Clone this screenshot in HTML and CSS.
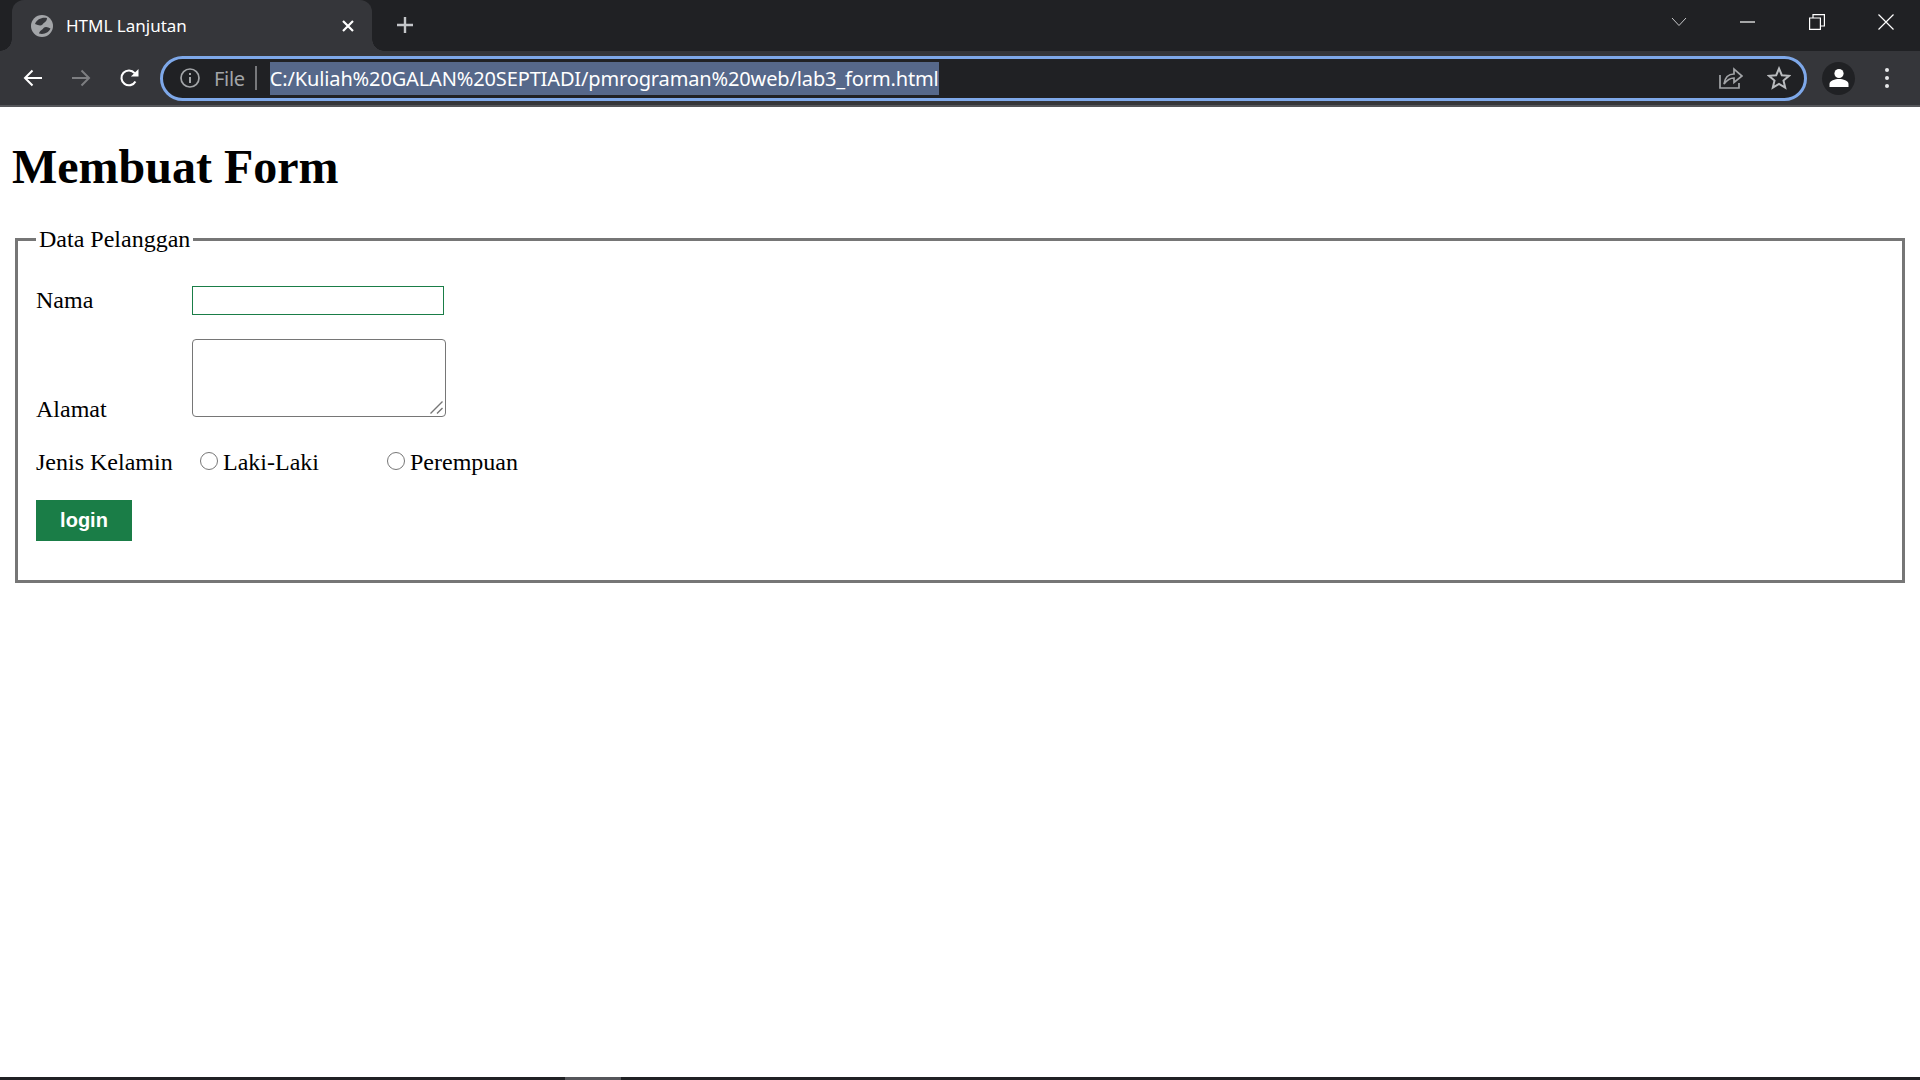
FILE: index.html
```html
<!DOCTYPE html>
<html lang="id">
<head>
  <meta charset="UTF-8" />
  <title>HTML Lanjutan</title>
  <link rel="stylesheet" href="styles.css">
</head>
<body>
  <div class="tab-bar">
    <div class="tab">
      <svg class="favicon" viewBox="0 0 22 22">
        <circle cx="11" cy="11" r="11" fill="#a3a5a8"/>
        <path d="M4 9 C6 4 11 2 16 3 C16 7 13 7 11.5 9.5 C9.5 11.5 7 10 4 9 Z" fill="#35363a"/>
        <path d="M8 18.5 C9 15 11.5 15 12.5 13 C14.5 11 17 12 19.5 13.5 C17.5 17.5 13 20 8 18.5 Z" fill="#35363a"/>
      </svg>
      <span class="tab-title">HTML Lanjutan</span>
      <svg class="tab-close" viewBox="0 0 14 14"><path d="M2 2 L12 12 M12 2 L2 12" stroke="#fff" stroke-width="2.2" fill="none"/></svg>
    </div>
    <svg class="new-tab" viewBox="0 0 18 18"><path d="M9 1 V17 M1 9 H17" stroke="#c4c6c9" stroke-width="2.4" fill="none"/></svg>
    <div class="window-controls">
      <svg class="win-chevron" viewBox="0 0 16 10"><path d="M1 1 L8 8.5 L15 1" stroke="#c8c9cb" stroke-width="1" fill="none"/></svg>
      <svg class="win-icon" viewBox="0 0 16 16"><path d="M0 8 H15" stroke="#fff" stroke-width="1.2" fill="none"/></svg>
      <svg class="win-icon" viewBox="0 0 16 16"><path d="M0.6 4 H11.4 V15.4 H0.6 Z M4 4 V0.6 H15.4 V12 H11.4" stroke="#fff" stroke-width="1.2" fill="none"/></svg>
      <svg class="win-icon" viewBox="0 0 16 16"><path d="M0.5 0.5 L15.5 15.5 M15.5 0.5 L0.5 15.5" stroke="#fff" stroke-width="1.2" fill="none"/></svg>
    </div>
  </div>

  <div class="toolbar">
    <svg class="nav-icon" viewBox="0 0 20 20"><path d="M19 10 H2 M9.5 2.5 L2 10 L9.5 17.5" stroke="#fff" stroke-width="2" fill="none"/></svg>
    <svg class="nav-icon" viewBox="0 0 20 20"><path d="M1 10 H18 M10.5 2.5 L18 10 L10.5 17.5" stroke="#7d7e81" stroke-width="2" fill="none"/></svg>
    <svg class="nav-icon" viewBox="0 0 20 20"><path d="M16.4 13.4 A7.4 7.4 0 1 1 15.6 5.2" stroke="#fff" stroke-width="2.1" fill="none"/><path d="M19.5 1 V8.6 H11.9 Z" fill="#fff"/></svg>

    <div class="omnibox">
      <svg class="info-icon" viewBox="0 0 20 20">
        <circle cx="10" cy="10" r="9" stroke="#a3a5a8" stroke-width="1.7" fill="none"/>
        <path d="M10 9 V15 M10 5 V7" stroke="#a3a5a8" stroke-width="2" fill="none"/>
      </svg>
      <span class="scheme">File</span>
      <span class="divider"></span>
      <span class="url">C:/Kuliah%20GALAN%20SEPTIADI/pmrograman%20web/lab3_form.html</span>
      <svg class="share-icon" viewBox="0 0 24 22">
        <path d="M1 8 V21 H20 V16" stroke="#a3a5a8" stroke-width="1.7" fill="none"/>
        <path d="M5 17 C6 10 10 7 15 7 V2 L23 9 L15 15.5 V11 C11 11 8 13 5 17 Z" stroke="#a3a5a8" stroke-width="1.7" fill="none"/>
      </svg>
      <svg class="star-icon" viewBox="0 0 24 24"><path d="M12 2.5 L14.8 9.2 L22 9.8 L16.5 14.5 L18.2 21.6 L12 17.8 L5.8 21.6 L7.5 14.5 L2 9.8 L9.2 9.2 Z" stroke="#b9bbbe" stroke-width="2" fill="none"/></svg>
    </div>

    <div class="avatar">
      <svg viewBox="0 0 20 20"><circle cx="10" cy="5.5" r="4.6" fill="#fff"/><path d="M0.5 19 V16 C0.5 12.5 6 11 10 11 C14 11 19.5 12.5 19.5 16 V19 Z" fill="#fff"/></svg>
    </div>
    <div class="menu-dots"><span></span><span></span><span></span></div>
  </div>

  <main class="page">
    <h1>Membuat Form</h1>
    <fieldset class="customer">
      <legend>Data Pelanggan</legend>
      <div class="row row-name">
        <label class="field-label" for="nama">Nama</label>
        <input class="text-input" type="text" id="nama" />
      </div>
      <div class="row row-address">
        <label class="field-label" for="alamat">Alamat</label>
        <div class="area-wrap">
          <textarea class="text-area" id="alamat"></textarea>
          <svg class="area-grip" viewBox="0 0 13 13"><path d="M0.5 12.5 L12.5 0.5 M7 12.5 L12.5 7" stroke="#767676" stroke-width="1.4" fill="none"/></svg>
        </div>
      </div>
      <div class="row row-gender">
        <span class="field-label">Jenis Kelamin</span>
        <label class="radio-option"><input type="radio" name="jk" />Laki-Laki</label>
        <label class="radio-option"><input type="radio" name="jk" />Perempuan</label>
      </div>
      <button class="login-btn" type="button">login</button>
    </fieldset>
  </main>

  <div class="bottom-strip"><span class="strip-thumb"></span></div>
</body>
</html>
```

FILE: styles.css
```css
html, body {
  margin: 0;
  padding: 0;
  height: 100%;
}

body {
  display: flex;
  flex-direction: column;
  background: #fff;
  font-family: "Liberation Serif", serif;
  font-size: 24px;
  color: #000;
  overflow: hidden;
}

/* browser chrome */
.tab-bar {
  display: flex;
  align-items: flex-start;
  height: 51px;
  padding-left: 12px;
  background: #202124;
  font-family: "Noto Sans", sans-serif;
}

.tab {
  position: relative;
  display: flex;
  align-items: center;
  width: 360px;
  height: 51px;
  padding: 0 17px 0 19px;
  box-sizing: border-box;
  background: #35363a;
  border-radius: 12px 12px 0 0;
}

/* little flares where the tab meets the toolbar */
.tab::before, .tab::after {
  content: "";
  position: absolute;
  bottom: 0;
  width: 12px;
  height: 12px;
}

.tab::before {
  left: -12px;
  background: radial-gradient(circle at 0 0, #202124 11.5px, #35363a 12px);
}

.tab::after {
  right: -12px;
  background: radial-gradient(circle at 100% 0, #202124 11.5px, #35363a 12px);
}

.favicon {
  width: 22px;
  height: 22px;
  margin-right: 13px;
}

.tab-title {
  flex: 1;
  color: #fff;
  font-size: 17px;
}

.tab-close {
  width: 14px;
  height: 14px;
}

.new-tab {
  width: 18px;
  height: 18px;
  margin: 16px 0 0 24px;
}

.window-controls {
  display: flex;
  align-items: center;
  gap: 53px;
  margin-left: auto;
  padding: 14px 26px 0 0;
}

.win-chevron {
  width: 16px;
  height: 10px;
}

.win-icon {
  width: 16px;
  height: 16px;
}

.toolbar {
  display: flex;
  align-items: center;
  height: 54px;
  padding-left: 23px;
  background: #35363a;
  border-bottom: 2px solid #55565a;
  font-family: "Noto Sans", sans-serif;
}

.nav-icon {
  width: 20px;
  height: 20px;
  margin-right: 28px;
}

.omnibox {
  display: flex;
  align-items: center;
  width: 1647px;
  height: 45px;
  margin-left: -7px;
  padding: 0 13px 0 17px;
  box-sizing: border-box;
  background: #202124;
  border: 3px solid #7ea8e9;
  border-radius: 23px;
}

.info-icon {
  width: 20px;
  height: 20px;
  margin-right: 14px;
}

.scheme {
  color: #a3a5a8;
  font-size: 20px;
  letter-spacing: -0.3px;
}

.divider {
  width: 2px;
  height: 24px;
  margin: 0 13px 0 10px;
  background: #77787b;
}

.url {
  height: 33px;
  line-height: 33px;
  background: #56688a;
  color: #fff;
  font-size: 20px;
  letter-spacing: -0.14px;
  white-space: nowrap;
}

.share-icon {
  width: 24px;
  height: 22px;
  margin-left: auto;
  margin-right: 24px;
}

.star-icon {
  width: 24px;
  height: 24px;
}

.avatar {
  display: flex;
  align-items: center;
  justify-content: center;
  width: 33px;
  height: 33px;
  margin-left: 15px;
  border-radius: 50%;
  background: #202124;
}

.avatar svg {
  width: 20px;
  height: 20px;
}

.menu-dots {
  display: flex;
  flex-direction: column;
  gap: 4px;
  margin-left: 30px;
}

.menu-dots span {
  width: 4px;
  height: 4px;
  border-radius: 50%;
  background: #e8e9ea;
}

/* page */
.page {
  flex: 1;
  padding: 0 12px;
}

h1 {
  margin: 32px 0;
  font-size: 48px;
}

.customer {
  margin: 0 3px;
  padding: 33px 18px 39px;
  border: 3px solid #767676;
}

.customer legend {
  padding: 0 3px;
}

.row {
  display: flex;
}

.field-label {
  width: 156px;
}

.row-name {
  align-items: center;
}

.row-address {
  align-items: flex-end;
  margin-top: 24px;
}

.row-gender {
  align-items: flex-start;
  margin-top: 26px;
}

.text-input {
  width: 252px;
  height: 29px;
  padding: 0;
  box-sizing: border-box;
  border: 1.5px solid #1a7d47;
  outline: none;
}

.area-wrap {
  position: relative;
  margin-bottom: 6px;
}

.text-area {
  display: block;
  width: 254px;
  height: 78px;
  padding: 0;
  box-sizing: border-box;
  border: 1.5px solid #767676;
  border-radius: 4px;
  resize: none;
}

.area-grip {
  position: absolute;
  right: 3px;
  bottom: 3px;
  width: 13px;
  height: 13px;
}

.radio-option {
  display: flex;
  align-items: flex-start;
  width: 187px;
}

.radio-option input {
  width: 18px;
  height: 18px;
  margin: 3px 5px 0 8px;
}

.login-btn {
  display: block;
  width: 96px;
  height: 41px;
  margin-top: 24px;
  padding: 0;
  border: none;
  background: #1a7d47;
  color: #fff;
  font-family: "Liberation Sans", sans-serif;
  font-size: 20px;
  font-weight: bold;
}

.bottom-strip {
  height: 3px;
  padding-left: 565px;
  background: #202124;
}

.strip-thumb {
  display: block;
  width: 56px;
  height: 3px;
  background: #55565a;
}
```
